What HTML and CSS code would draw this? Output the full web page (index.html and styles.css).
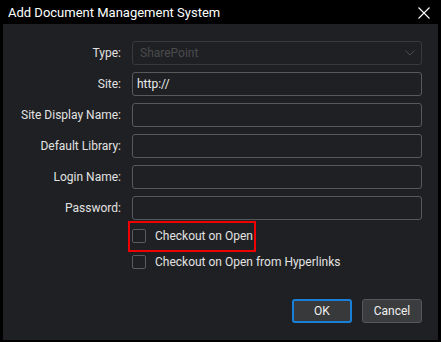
FILE: index.html
```html
<!DOCTYPE html>
<html lang="en">
<head>
  <meta charset="UTF-8" />
  <title>Add Document Management System</title>
  <link rel="stylesheet" href="styles.css">
</head>
<body>
  <div class="dialog">
    <div class="titlebar">
      <span class="title">Add Document Management System</span>
      <svg class="close" width="12" height="12" viewBox="0 0 12 12">
        <path d="M0.5 0.5 L11.5 11.5 M11.5 0.5 L0.5 11.5" stroke="#fff" stroke-width="1.1" fill="none"/>
      </svg>
    </div>

    <div class="content">
      <div class="form">
        <label>Type:</label>
        <div class="select">
          <span>SharePoint</span>
          <svg width="10" height="6" viewBox="0 0 10 6">
            <path d="M0.5 0.5 L5 5 L9.5 0.5" stroke="#4a4b4e" stroke-width="1" fill="none"/>
          </svg>
        </div>

        <label for="site">Site:</label>
        <input type="text" id="site" value="http://">

        <label for="display">Site Display Name:</label>
        <input type="text" id="display">

        <label for="library">Default Library:</label>
        <input type="text" id="library">

        <label for="login">Login Name:</label>
        <input type="text" id="login">

        <label for="password">Password:</label>
        <input type="password" id="password">
      </div>

      <div class="checks">
        <div class="check highlight">
          <span class="box"></span>
          <span>Checkout on Open</span>
        </div>
        <div class="check">
          <span class="box"></span>
          <span>Checkout on Open from Hyperlinks</span>
        </div>
      </div>

      <div class="buttons">
        <button class="btn primary">OK</button>
        <button class="btn">Cancel</button>
      </div>
    </div>
  </div>
</body>
</html>
```

FILE: styles.css
```css
* { box-sizing: border-box; margin: 0; padding: 0; }

body {
  font-family: Roboto, 'Liberation Sans', sans-serif;
  background: #000;
  color: #e2e2e2;
  width: 441px;
  height: 342px;
  overflow: hidden;
}

.dialog {
  width: 441px;
  height: 342px;
  background: #000;
  display: flex;
  flex-direction: column;
}

.titlebar {
  height: 24px;
  display: flex;
  align-items: center;
  justify-content: space-between;
  padding: 0 11px 0 8px;
  color: #fff;
  font-size: 13px;
}

.close {
  margin-top: 2px;
}

.content {
  flex: 1;
  margin: 0 3px 2px 3px;
  background: #1f2023;
  padding: 17px 16px 0 0;
}

.form {
  display: grid;
  grid-template-columns: 118px 290px;
  grid-auto-rows: 24px;
  column-gap: 11px;
  row-gap: 7px;
  align-items: center;
}

label {
  text-align: right;
  font-size: 12px;
  color: #e2e2e2;
}

input,
.select {
  height: 24px;
  width: 100%;
  background: #1f2023;
  border: 1px solid #58595b;
  border-radius: 3px;
  color: #ececec;
  font-family: inherit;
  font-size: 12px;
  padding: 0 4px;
  outline: none;
}

.select {
  display: flex;
  align-items: center;
  justify-content: space-between;
  border-color: #38393c;
  color: #4a4b4e;
  padding: 0 6px 0 7px;
}

.checks {
  margin: 9px 0 0 129px;
  display: flex;
  flex-direction: column;
  gap: 12px;
}

.check {
  display: flex;
  align-items: center;
  gap: 9px;
  font-size: 12px;
  height: 14px;
  position: relative;
}

.box {
  width: 14px;
  height: 14px;
  border: 1px solid #5a5b5e;
  border-radius: 2px;
}

.highlight::after {
  content: '';
  position: absolute;
  left: -4px;
  top: -8px;
  width: 124px;
  height: 27px;
  border: 2px solid #f00000;
}

.buttons {
  display: flex;
  justify-content: flex-end;
  gap: 10px;
  margin-top: 30px;
}

.btn {
  width: 60px;
  height: 24px;
  background: #3b3c3e;
  border: 1px solid #56575a;
  border-radius: 3px;
  color: #f0f0f0;
  font-family: inherit;
  font-size: 12px;
}

.btn.primary {
  border: 2px solid #1a7fd6;
  background: #38393b;
}
```
